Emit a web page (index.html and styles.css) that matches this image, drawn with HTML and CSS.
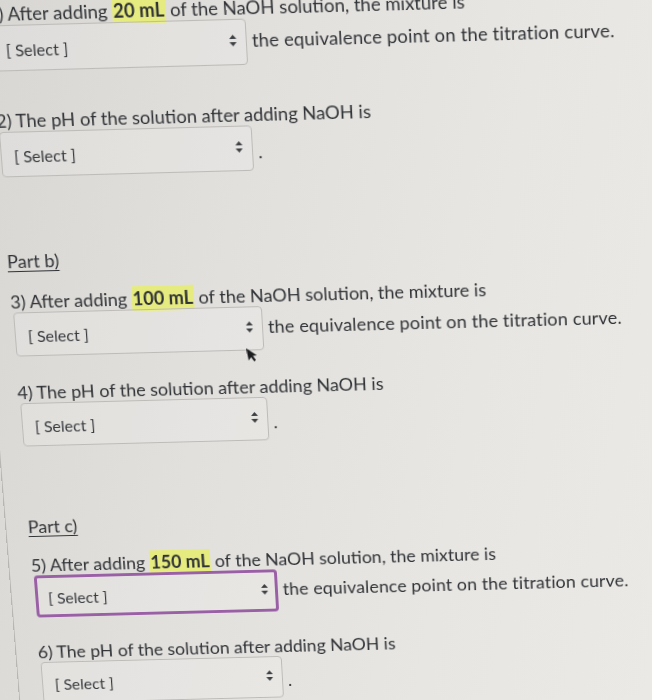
FILE: index.html
```html
<!DOCTYPE html>
<html lang="en">
<head>
<meta charset="utf-8">
<title>Titration quiz</title>
<link rel="stylesheet" href="styles.css">
</head>
<body>
<main class="sheet">
  <section class="part">
    <p class="question">1) After adding <mark class="hl">20 mL</mark> of the NaOH solution, the mixture is</p>
    <div class="answer answer--first">
      <div class="select"><span class="select-label">[ Select ]</span><svg class="arrows" viewBox="0 0 7 11"><path d="M3.5 0 7 4H0Z M0 7H7L3.5 11Z"/></svg></div>
      <span class="tail">the equivalence point on the titration curve.</span>
    </div>
    <p class="question">2) The pH of the solution after adding NaOH is</p>
    <div class="answer">
      <div class="select"><span class="select-label">[ Select ]</span><svg class="arrows" viewBox="0 0 7 11"><path d="M3.5 0 7 4H0Z M0 7H7L3.5 11Z"/></svg></div>
      <span class="tail dot">.</span>
    </div>
  </section>

  <section class="part">
    <p class="part-title">Part b)</p>
    <p class="question">3) After adding <mark class="hl">100 mL</mark> of the NaOH solution, the mixture is</p>
    <div class="answer">
      <div class="select"><span class="select-label">[ Select ]</span><svg class="arrows" viewBox="0 0 7 11"><path d="M3.5 0 7 4H0Z M0 7H7L3.5 11Z"/></svg></div>
      <span class="tail">the equivalence point on the titration curve.</span>
      <svg class="cursor" viewBox="0 0 11 16"><path d="M1 1V13.5L4 10.6 6.3 15.2 8.3 14.2 6 9.7H10Z"/></svg>
    </div>
    <p class="question">4) The pH of the solution after adding NaOH is</p>
    <div class="answer">
      <div class="select"><span class="select-label">[ Select ]</span><svg class="arrows" viewBox="0 0 7 11"><path d="M3.5 0 7 4H0Z M0 7H7L3.5 11Z"/></svg></div>
      <span class="tail dot">.</span>
    </div>
  </section>

  <section class="part">
    <p class="part-title">Part c)</p>
    <p class="question">5) After adding <mark class="hl">150 mL</mark> of the NaOH solution, the mixture is</p>
    <div class="answer">
      <div class="select is-focused"><span class="select-label">[ Select ]</span><svg class="arrows" viewBox="0 0 7 11"><path d="M3.5 0 7 4H0Z M0 7H7L3.5 11Z"/></svg></div>
      <span class="tail">the equivalence point on the titration curve.</span>
    </div>
    <p class="question">6) The pH of the solution after adding NaOH is</p>
    <div class="answer">
      <div class="select"><span class="select-label">[ Select ]</span><svg class="arrows" viewBox="0 0 7 11"><path d="M3.5 0 7 4H0Z M0 7H7L3.5 11Z"/></svg></div>
      <span class="tail dot">.</span>
    </div>
  </section>
</main>
</body>
</html>
```

FILE: styles.css
```css
html,
body {
  margin: 0;
  height: 100%;
  overflow: hidden;
}

body {
  background: linear-gradient(100deg, #d9d7d4 0%, #e2e0dd 35%, #e8e6e3 70%, #eae9e6 100%);
  font-family: Lato, "Noto Sans", sans-serif;
  color: #303336;
}

/* the quiz page, seen on a monitor tilted slightly back */
.sheet {
  box-sizing: border-box;
  width: 640px;
  min-height: 780px;
  margin: -4px 0 0 -8px;
  padding: 0 0 0 22px;
  border-left: 1px solid #b8b6b3;
  transform-origin: 620px 364px;
  transform: perspective(1000px) rotateX(-5deg) rotate(-1.5deg);
}

.part + .part {
  margin-top: 71px;
}

.question,
.part-title {
  margin: 0;
  font-size: 18px;
  line-height: 22px;
  white-space: nowrap;
}

.part-title {
  text-decoration: underline;
  text-underline-offset: 3px;
  margin-bottom: 18px;
}

.hl {
  background: #e6eb80;
  color: inherit;
  font-weight: 700;
  padding: 1px 1px 2px;
}

.answer {
  position: relative;
  display: flex;
  align-items: center;
  margin: 0 0 25px 2px;
}

.answer--first {
  margin-bottom: 36px;
}

.part .answer:last-child {
  margin-bottom: 0;
}

.select {
  box-sizing: border-box;
  flex: none;
  display: flex;
  align-items: center;
  justify-content: space-between;
  width: 248px;
  height: 44px;
  padding: 0 9px 0 12px;
  border: 1px solid #bdbbb8;
  border-radius: 4px;
  background: rgba(255, 255, 255, 0.14);
}

.select.is-focused {
  border: 3px solid #9a60a5;
  padding: 0 7px 0 10px;
}

.select-label {
  font-size: 16px;
  color: #383b3e;
  padding-top: 2px;
}

.arrows {
  width: 7px;
  height: 11px;
  fill: #3d4043;
  margin-top: -4px;
}

.tail {
  margin-left: 5px;
  margin-top: -4px;
  font-size: 18px;
  letter-spacing: 0.15px;
  white-space: nowrap;
}

.tail.dot {
  margin-left: 5px;
  margin-top: 6px;
}

/* mouse pointer resting under the third answer */
.cursor {
  position: absolute;
  left: 230px;
  top: 40px;
  width: 11px;
  height: 16px;
  fill: #1c1d1f;
  transform: rotate(-8deg);
}
```
